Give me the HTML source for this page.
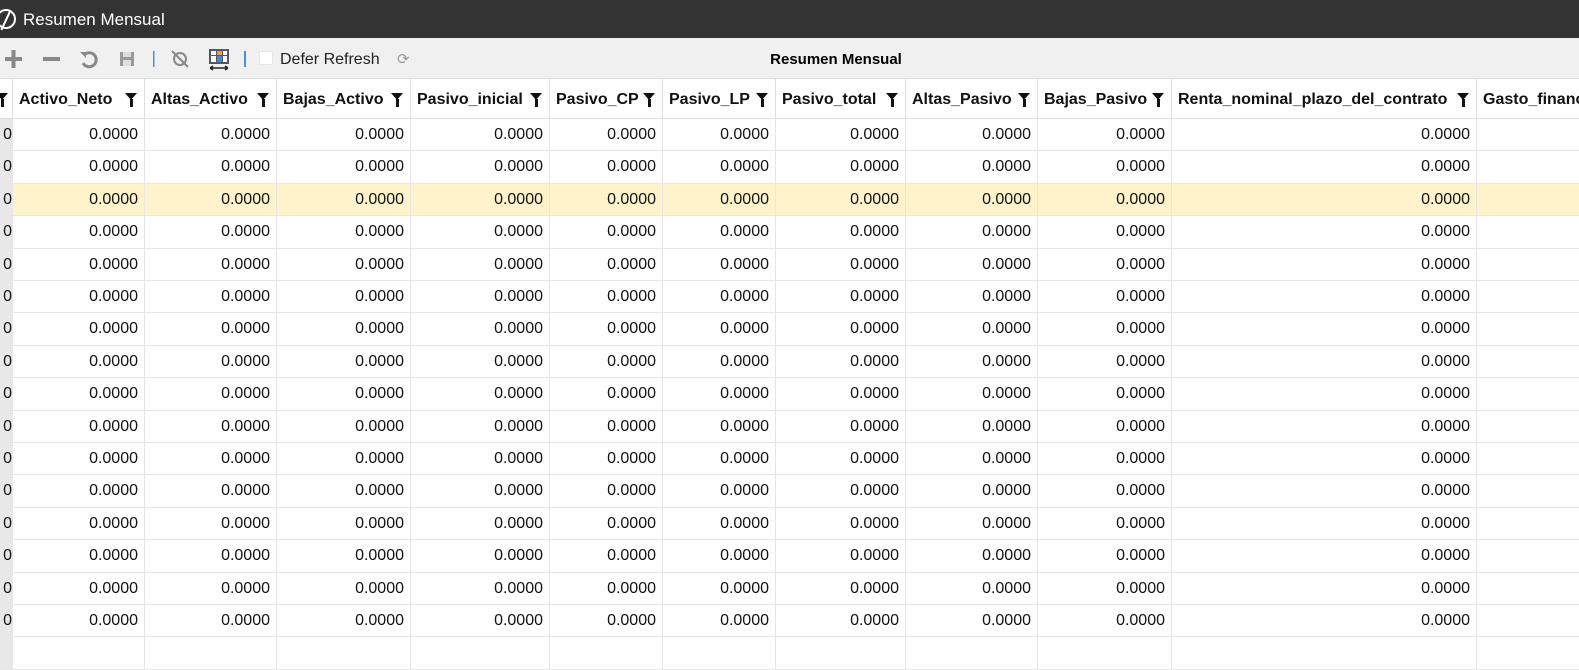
<!DOCTYPE html>
<html><head><meta charset="utf-8"><style>
*{margin:0;padding:0;box-sizing:border-box}
body{width:1579px;height:649px;overflow:hidden;background:#fff;font-family:"Liberation Sans",sans-serif;position:relative}
.title{position:absolute;left:0;top:0;width:1579px;height:38px;background:#333;color:#fff;font-size:17px;line-height:39px;padding-left:23px}
.logo{position:absolute;left:-4px;top:9px;width:20px;height:20px;border:2px solid #fff;border-radius:50%}
.logo:after{content:"";position:absolute;left:7px;top:-2px;width:2px;height:22px;background:#fff;transform:rotate(25deg)}
.tb{position:absolute;left:0;top:38px;width:1579px;height:41px;background:#f0f0f0;border-bottom:1px solid #ddd}
.tb .t{position:absolute;top:0;line-height:43px;font-size:16px;color:#222}
.cap{position:absolute;left:0;width:1672px;text-align:center;top:0;line-height:43px;font-weight:bold;font-size:15px}
.row{position:absolute;left:0;width:1579px;height:32.4px;border-bottom:1px solid #e6e6e6;font-size:16px;color:#111}
.row div{position:absolute;top:0;height:100%;border-right:1px solid #e6e6e6;text-align:right;padding-right:6px;line-height:32px;white-space:nowrap;overflow:hidden}
.row div.h{background:#e8e8e8;padding-right:0}
.row.sel{background:#fff3cc}
.hd{position:absolute;left:0;top:79px;width:1579px;height:40px;border-bottom:1px solid #e0e0e0;font-size:16px;font-weight:bold;color:#111}
.hd div{position:absolute;top:0;height:100%;border-right:1px solid #e0e0e0;padding-left:6px;line-height:41px;white-space:nowrap;overflow:hidden}
i{position:absolute;right:7px;top:14px;width:0;height:0;border-left:6px solid transparent;border-right:6px solid transparent;border-top:7px solid #111}
i:after{content:"";position:absolute;left:-1.5px;top:-1px;width:3px;height:8px;background:#111}
</style></head><body>
<div class="title"><div class="logo"></div>Resumen Mensual</div>
<div class="tb">
<svg width="240" height="41" style="position:absolute;left:0;top:0">
<g fill="#888"><rect x="5" y="19" width="17" height="4"/><rect x="11.5" y="12" width="4" height="18"/>
<rect x="43" y="19" width="17" height="4"/></g>
<path d="M84 17 A7 7 0 1 1 83 25" fill="none" stroke="#888" stroke-width="3"/><path d="M80 14 L86 14 L86 20 Z" fill="#888"/>
<rect x="120" y="14" width="14" height="14" fill="#999"/><rect x="123" y="14" width="8" height="5" fill="#ddd"/><rect x="123" y="22" width="8" height="6" fill="#ddd"/>
<rect x="153" y="13" width="1.5" height="16" fill="#4a90d9"/>
<circle cx="180" cy="21" r="6" fill="none" stroke="#888" stroke-width="2"/><path d="M172 13 L188 29" stroke="#888" stroke-width="2"/>
<rect x="209" y="11" width="20" height="15" fill="#556"/><rect x="211" y="13" width="5" height="4" fill="#fff"/><rect x="217" y="13" width="5" height="4" fill="#f0a030"/><rect x="223" y="13" width="4" height="4" fill="#fff"/><rect x="211" y="18" width="5" height="6" fill="#fff"/><rect x="217" y="18" width="5" height="6" fill="#3a8ee0"/><rect x="223" y="18" width="4" height="6" fill="#fff"/>
<path d="M210 30 L228 30 M210 30 l3 -2 M210 30 l3 2 M228 30 l-3 -2 M228 30 l-3 2" stroke="#222" stroke-width="1.5"/>
</svg>
<div style="position:absolute;left:244px;top:13px;width:1.5px;height:16px;background:#4a90d9"></div>
<div style="position:absolute;left:259px;top:13px;width:14px;height:14px;background:#fff;border:1px solid #e8e8e8"></div>
<div class="t" style="left:280px">Defer Refresh</div>
<div class="t" style="left:397px;color:#999;font-size:15px">⟳</div>
<div class="cap">Resumen Mensual</div>
</div>
<div class="hd">
<div style="left:0;width:13px;padding:0"><i style="right:4px"></i></div>
<div style="left:13px;width:132px">Activo_Neto<i></i></div>
<div style="left:145px;width:132px">Altas_Activo<i></i></div>
<div style="left:277px;width:134px">Bajas_Activo<i></i></div>
<div style="left:411px;width:139px">Pasivo_inicial<i></i></div>
<div style="left:550px;width:113px">Pasivo_CP<i></i></div>
<div style="left:663px;width:113px">Pasivo_LP<i></i></div>
<div style="left:776px;width:130px">Pasivo_total<i></i></div>
<div style="left:906px;width:132px">Altas_Pasivo<i></i></div>
<div style="left:1038px;width:134px">Bajas_Pasivo<i></i></div>
<div style="left:1172px;width:305px">Renta_nominal_plazo_del_contrato<i></i></div>
<div style="left:1477px;width:110px;border:none">Gasto_financiero</div>
</div>
<div id="rows"></div>
<style>
.c0{left:0;width:13px}.c1{left:13px;width:132px}.c2{left:145px;width:132px}.c3{left:277px;width:134px}.c4{left:411px;width:139px}.c5{left:550px;width:113px}.c6{left:663px;width:113px}.c7{left:776px;width:130px}.c8{left:906px;width:132px}.c9{left:1038px;width:134px}.c10{left:1172px;width:305px}
</style>
<div class="row" style="top:119px"><div class="h c0">0</div><div class="c1">0.0000</div><div class="c2">0.0000</div><div class="c3">0.0000</div><div class="c4">0.0000</div><div class="c5">0.0000</div><div class="c6">0.0000</div><div class="c7">0.0000</div><div class="c8">0.0000</div><div class="c9">0.0000</div><div class="c10">0.0000</div></div>
<div class="row" style="top:151.4px"><div class="h c0">0</div><div class="c1">0.0000</div><div class="c2">0.0000</div><div class="c3">0.0000</div><div class="c4">0.0000</div><div class="c5">0.0000</div><div class="c6">0.0000</div><div class="c7">0.0000</div><div class="c8">0.0000</div><div class="c9">0.0000</div><div class="c10">0.0000</div></div>
<div class="row sel" style="top:183.8px"><div class="h c0">0</div><div class="c1">0.0000</div><div class="c2">0.0000</div><div class="c3">0.0000</div><div class="c4">0.0000</div><div class="c5">0.0000</div><div class="c6">0.0000</div><div class="c7">0.0000</div><div class="c8">0.0000</div><div class="c9">0.0000</div><div class="c10">0.0000</div></div>
<div class="row" style="top:216.2px"><div class="h c0">0</div><div class="c1">0.0000</div><div class="c2">0.0000</div><div class="c3">0.0000</div><div class="c4">0.0000</div><div class="c5">0.0000</div><div class="c6">0.0000</div><div class="c7">0.0000</div><div class="c8">0.0000</div><div class="c9">0.0000</div><div class="c10">0.0000</div></div>
<div class="row" style="top:248.6px"><div class="h c0">0</div><div class="c1">0.0000</div><div class="c2">0.0000</div><div class="c3">0.0000</div><div class="c4">0.0000</div><div class="c5">0.0000</div><div class="c6">0.0000</div><div class="c7">0.0000</div><div class="c8">0.0000</div><div class="c9">0.0000</div><div class="c10">0.0000</div></div>
<div class="row" style="top:281px"><div class="h c0">0</div><div class="c1">0.0000</div><div class="c2">0.0000</div><div class="c3">0.0000</div><div class="c4">0.0000</div><div class="c5">0.0000</div><div class="c6">0.0000</div><div class="c7">0.0000</div><div class="c8">0.0000</div><div class="c9">0.0000</div><div class="c10">0.0000</div></div>
<div class="row" style="top:313.4px"><div class="h c0">0</div><div class="c1">0.0000</div><div class="c2">0.0000</div><div class="c3">0.0000</div><div class="c4">0.0000</div><div class="c5">0.0000</div><div class="c6">0.0000</div><div class="c7">0.0000</div><div class="c8">0.0000</div><div class="c9">0.0000</div><div class="c10">0.0000</div></div>
<div class="row" style="top:345.8px"><div class="h c0">0</div><div class="c1">0.0000</div><div class="c2">0.0000</div><div class="c3">0.0000</div><div class="c4">0.0000</div><div class="c5">0.0000</div><div class="c6">0.0000</div><div class="c7">0.0000</div><div class="c8">0.0000</div><div class="c9">0.0000</div><div class="c10">0.0000</div></div>
<div class="row" style="top:378.2px"><div class="h c0">0</div><div class="c1">0.0000</div><div class="c2">0.0000</div><div class="c3">0.0000</div><div class="c4">0.0000</div><div class="c5">0.0000</div><div class="c6">0.0000</div><div class="c7">0.0000</div><div class="c8">0.0000</div><div class="c9">0.0000</div><div class="c10">0.0000</div></div>
<div class="row" style="top:410.6px"><div class="h c0">0</div><div class="c1">0.0000</div><div class="c2">0.0000</div><div class="c3">0.0000</div><div class="c4">0.0000</div><div class="c5">0.0000</div><div class="c6">0.0000</div><div class="c7">0.0000</div><div class="c8">0.0000</div><div class="c9">0.0000</div><div class="c10">0.0000</div></div>
<div class="row" style="top:443px"><div class="h c0">0</div><div class="c1">0.0000</div><div class="c2">0.0000</div><div class="c3">0.0000</div><div class="c4">0.0000</div><div class="c5">0.0000</div><div class="c6">0.0000</div><div class="c7">0.0000</div><div class="c8">0.0000</div><div class="c9">0.0000</div><div class="c10">0.0000</div></div>
<div class="row" style="top:475.4px"><div class="h c0">0</div><div class="c1">0.0000</div><div class="c2">0.0000</div><div class="c3">0.0000</div><div class="c4">0.0000</div><div class="c5">0.0000</div><div class="c6">0.0000</div><div class="c7">0.0000</div><div class="c8">0.0000</div><div class="c9">0.0000</div><div class="c10">0.0000</div></div>
<div class="row" style="top:507.8px"><div class="h c0">0</div><div class="c1">0.0000</div><div class="c2">0.0000</div><div class="c3">0.0000</div><div class="c4">0.0000</div><div class="c5">0.0000</div><div class="c6">0.0000</div><div class="c7">0.0000</div><div class="c8">0.0000</div><div class="c9">0.0000</div><div class="c10">0.0000</div></div>
<div class="row" style="top:540.2px"><div class="h c0">0</div><div class="c1">0.0000</div><div class="c2">0.0000</div><div class="c3">0.0000</div><div class="c4">0.0000</div><div class="c5">0.0000</div><div class="c6">0.0000</div><div class="c7">0.0000</div><div class="c8">0.0000</div><div class="c9">0.0000</div><div class="c10">0.0000</div></div>
<div class="row" style="top:572.6px"><div class="h c0">0</div><div class="c1">0.0000</div><div class="c2">0.0000</div><div class="c3">0.0000</div><div class="c4">0.0000</div><div class="c5">0.0000</div><div class="c6">0.0000</div><div class="c7">0.0000</div><div class="c8">0.0000</div><div class="c9">0.0000</div><div class="c10">0.0000</div></div>
<div class="row" style="top:605px"><div class="h c0">0</div><div class="c1">0.0000</div><div class="c2">0.0000</div><div class="c3">0.0000</div><div class="c4">0.0000</div><div class="c5">0.0000</div><div class="c6">0.0000</div><div class="c7">0.0000</div><div class="c8">0.0000</div><div class="c9">0.0000</div><div class="c10">0.0000</div></div>
<div class="row" style="top:637.4px"><div class="h c0"></div><div class="c1"></div><div class="c2"></div><div class="c3"></div><div class="c4"></div><div class="c5"></div><div class="c6"></div><div class="c7"></div><div class="c8"></div><div class="c9"></div><div class="c10"></div></div>
</body></html>
